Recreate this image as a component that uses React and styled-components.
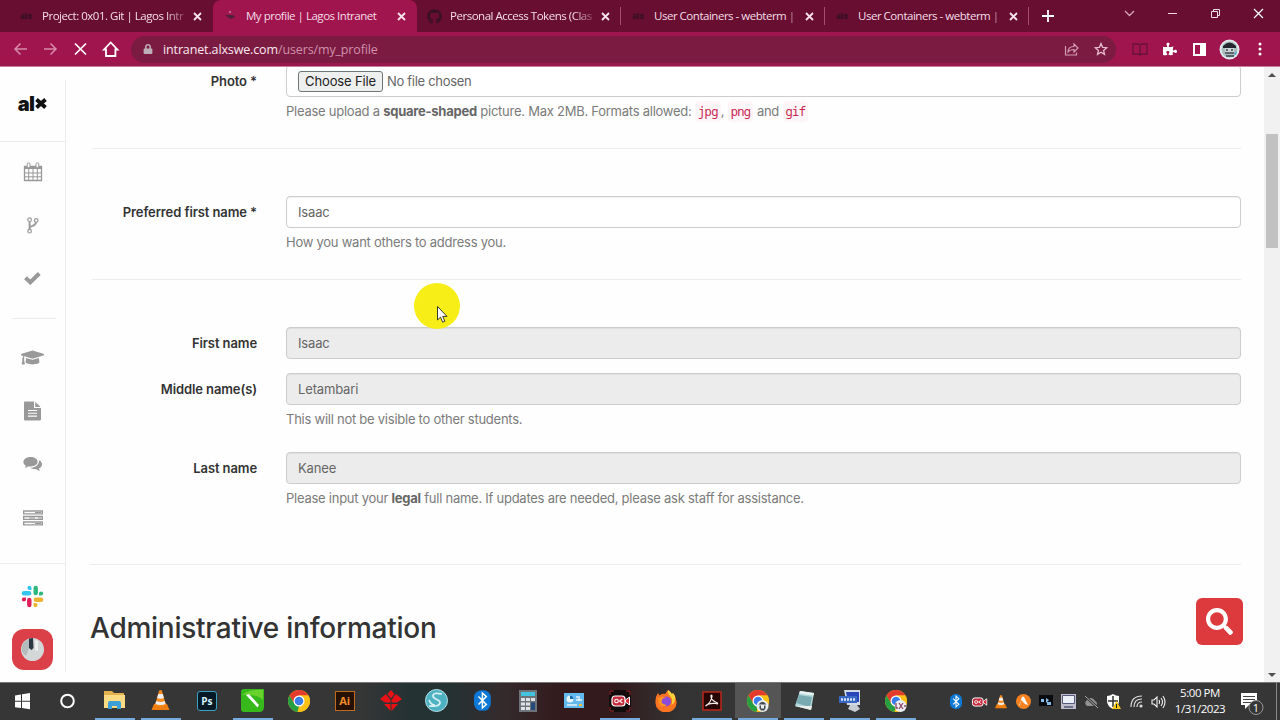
import React from 'react'
import styled, {createGlobalStyle, css} from 'styled-components'
import {FaGraduationCap, FaSearch, FaGithub, FaPuzzlePiece, FaLock} from 'react-icons/fa'

const COLORS = {
  frame: '#670e31',
  toolbar: '#a1154e',
  address: '#7c1b42',
  pink: '#d88aaa',
  line: '#ececec',
  icon: '#999',
  text: '#333',
  muted: '#7b7b7b',
  red: '#dc3a3c',
  taskbar: '#363636'
}

const UI_FONT = '"Open Sans", "Noto Sans", sans-serif'
const PAGE_FONT = 'Inter, Roboto, sans-serif'

const GlobalStyle = createGlobalStyle`
  * { box-sizing: border-box; }
  body {
    margin: 0;
    overflow: hidden;
    background: #fff;
  }
`

const Screen = styled.div`
  position: relative;
  display: flex;
  flex-direction: column;
  width: 1280px;
  height: 720px;
  overflow: hidden;
  font-family: ${PAGE_FONT};
`

/* Browser frame */

const TabStrip = styled.div`
  display: flex;
  flex: none;
  height: 32px;
  padding-left: 9px;
  background: ${COLORS.frame};
  color: #f4dde6;
  font-family: ${UI_FONT};
`

const Tab = styled.div`
  display: flex;
  align-items: center;
  width: 204px;
  height: 32px;
  padding: 0 10px 0 9px;
  border-radius: 8px 8px 0 0;
  background: ${p => (p.$active ? COLORS.toolbar : 'transparent')};
`

const TabDivider = styled.i`
  width: 1px;
  height: 18px;
  margin: 7px 0 0 -1px;
  background: #a34d6f;
`

const Favicon = styled.span`
  display: flex;
  flex: none;
  justify-content: center;
  width: 16px;
  color: #3a1023;
  font: 900 8px/10px Inter, sans-serif;
`

const TabTitle = styled.span`
  flex: none;
  width: 143px;
  margin-left: 8px;
  white-space: nowrap;
  font-size: 11.5px;
  line-height: 18px;
  letter-spacing: -0.48px;
  ${p => p.$fade && css`
    mask-image: linear-gradient(90deg, #000 86%, rgba(0, 0, 0, 0.25));
  `}
`

const TitleBar = styled.span`
  opacity: 0.6;
`

const TabClose = styled.svg`
  flex: none;
  width: 9px;
  height: 9px;
  margin-left: 8px;
`

const NewTab = styled.svg`
  width: 12px;
  height: 12px;
  margin: 10px 0 0 13px;
`

const WindowButtons = styled.div`
  display: flex;
  margin-left: auto;
  height: 27px;

  svg {
    width: 43px;
    height: 27px;
  }
`

const Toolbar = styled.div`
  display: flex;
  align-items: center;
  flex: none;
  height: 35px;
  background: linear-gradient(${COLORS.toolbar} 85%, #98184a);
  border-bottom: 1px solid #c87f9d;
  font-family: ${UI_FONT};
`

const NavButtons = styled.div`
  display: flex;
  width: 131px;
  padding-left: 6px;

  svg {
    width: 30px;
    height: 18px;
  }
`

const AddressBar = styled.div`
  display: flex;
  align-items: center;
  width: 985px;
  height: 27px;
  padding: 0 8px 0 12px;
  border-radius: 14px;
  background: ${COLORS.address};
  color: #bdb0b6;
`

const Url = styled.span`
  flex: 1;
  margin-left: 10px;
  color: #cf91ab;
  font-size: 12.5px;
  letter-spacing: -0.13px;

  b {
    color: #f8e9ef;
    font-weight: 400;
  }
`

const AddressActions = styled.div`
  display: flex;
  gap: 14px;
`

const Extensions = styled.div`
  display: flex;
  align-items: center;
  margin-left: 13px;
  color: #fff;

  svg { display: block; }
`

const ExtensionSlot = styled.span`
  display: flex;
  justify-content: center;
  width: ${p => p.$width}px;
`

/* Page */

const Page = styled.div`
  display: flex;
  flex: none;
  height: 615px;
  overflow: hidden;
  background: #fefefe;
`

const Sidebar = styled.aside`
  display: flex;
  flex: none;
  flex-direction: column;
  width: 66px;
  height: 592px;
  margin-top: 13px;
  border-right: 1px solid ${COLORS.line};
  color: ${COLORS.icon};
`

const Logo = styled.div`
  display: flex;
  flex: none;
  justify-content: center;
  height: 62px;
  padding-top: 14px;
  border-bottom: 1px solid ${COLORS.line};
  color: #111;
  font: 900 20px/20px Inter, sans-serif;
  letter-spacing: -0.6px;

  svg {
    width: 12px;
    height: 11px;
    margin: 4px 0 0 1px;
  }
`

const SideGroup = styled.div`
  display: grid;
  flex: none;
  grid-auto-rows: 53.5px;
  place-items: center;
  padding: ${p => p.$pad};
`

const SideRule = styled.i`
  flex: none;
  height: 1px;
  margin: ${p => (p.$inset ? '0 9px 0 12px' : 0)};
  background: ${COLORS.line};
`

const ProfileTile = styled.div`
  display: grid;
  place-items: center;
  width: 41px;
  height: 41px;
  border-radius: 12px;
  background: #db4048;
`

const Main = styled.main`
  flex: 1;
  min-width: 0;
  padding: 0 24px;
`

const FormRow = styled.div`
  display: grid;
  grid-template-columns: 167px 955px;
  column-gap: 29px;
  margin-top: ${p => p.$top}px;
`

const FieldLabel = styled.label`
  color: ${COLORS.text};
  font-size: 13px;
  font-weight: 600;
  line-height: 32px;
  text-align: right;
  white-space: nowrap;
  letter-spacing: -0.1px;
`

const Input = styled.input`
  display: block;
  width: 955px;
  height: 32px;
  padding: 0 11px;
  border: 1px solid #ccc;
  border-radius: 4px;
  background: ${p => (p.readOnly ? '#ececec' : '#fff')};
  box-shadow: inset 0 1px 1px rgba(0, 0, 0, 0.06);
  color: #666;
  font: 13px ${PAGE_FONT};
  letter-spacing: -0.15px;
  outline: 0;
`

const FileInput = styled.div`
  display: flex;
  align-items: center;
  height: 32px;
  padding: 0 11px;
  border: 1px solid #ccc;
  border-radius: 4px;
  background: #fff;
  color: #666;
  font-size: 13px;
  letter-spacing: -0.3px;
`

const FileButton = styled.button`
  width: 85px;
  height: 21px;
  margin-right: 4px;
  padding: 0;
  border: 1px solid #6d7674;
  border-radius: 3px;
  background: #edf0ef;
  color: #222;
  font: 13px/18px ${PAGE_FONT};
  letter-spacing: -0.15px;
  white-space: nowrap;
`

const Help = styled.p`
  height: 20px;
  margin: 4px 0 0;
  color: ${COLORS.muted};
  font-size: 13px;
  line-height: 20px;
  white-space: nowrap;
  letter-spacing: -0.25px;

  b {
    color: #666;
    font-weight: 700;
  }
`

const Code = styled.code`
  padding: 2px 3px;
  border-radius: 4px;
  background: #fdf5f7;
  color: #c7254e;
  font: 12px "Noto Sans Mono", "DejaVu Sans Mono", monospace;
  letter-spacing: -0.6px;
`

const Rule = styled.hr`
  width: ${p => (p.$wide ? 1151 : 1149)}px;
  height: 1px;
  margin: ${p => p.$top}px 0 0 ${p => (p.$wide ? 0 : 2)}px;
  border: 0;
  background: ${COLORS.line};
`

const SectionFooter = styled.div`
  display: flex;
  width: 1153px;
  justify-content: space-between;
  align-items: flex-start;
`

const Heading = styled.h2`
  margin: 45px 0 0;
  color: ${COLORS.text};
  font-size: 28px;
  font-weight: 500;
  line-height: 36px;
  white-space: nowrap;
  letter-spacing: -0.25px;
`

const SearchButton = styled.button`
  display: grid;
  place-items: center;
  width: 47px;
  height: 47px;
  margin-top: 33px;
  padding: 0;
  border: 0;
  border-radius: 6px;
  background: ${COLORS.red};
  color: #fff;
`

const Scrollbar = styled.div`
  display: flex;
  flex: none;
  flex-direction: column;
  align-items: center;
  width: 16px;
  background: #f1f1f1;
`

const ScrollArrow = styled.i`
  border: 4px solid transparent;
  ${p => (p.$down
    ? css`border-top-color: #505050; margin: auto 0 1px;`
    : css`border-bottom-color: #505050; margin-top: 2px;`)}
`

const ScrollThumb = styled.div`
  width: 12px;
  height: 114px;
  margin-top: 57px;
  background: #c1c1c1;
`

/* Taskbar */

const Taskbar = styled.footer`
  display: flex;
  flex: none;
  height: 38px;
  border-top: 1px solid #777;
  background: linear-gradient(90deg, #363636 0 28%, #243234 32% 35%, #342b2d 39%, #331a1d 44% 48%, #333 53%, #363636 60%);
  color: #fff;
  font-family: ${UI_FONT};
`

const SystemButtons = styled.div`
  display: flex;
  width: 92px;

  svg {
    width: 45px;
    height: 36px;
  }
`

const TaskItem = styled.div`
  display: grid;
  place-items: center;
  width: 45.95px;
  height: 37px;
  border-bottom: 2px solid transparent;
  background: ${p => (p.$active ? '#555' : 'none')};
  background-clip: padding-box;
  ${p => p.$open && css`
    border-image: linear-gradient(90deg, transparent 10%, #77aadd 10% 90%, transparent 90%) 2;
  `}

  svg { display: block; }
`

const AppBadge = styled.span`
  display: grid;
  place-items: center;
  width: 20px;
  height: 20px;
  border: 1.5px solid ${p => p.$color};
  border-radius: ${p => p.$radius || 0};
  background: ${p => p.$bg};
  color: ${p => p.$fg || p.$color};
  font: 700 ${p => p.$size || 10}px/1 ${UI_FONT};
`

const Tray = styled.div`
  display: grid;
  grid-template-columns: repeat(10, 22.5px);
  place-items: center;
  margin-left: auto;

  svg { display: block; }
`

const Clock = styled.div`
  width: 60px;
  padding-top: 2px;
  font-size: 11.5px;
  line-height: 16px;
  text-align: center;
  white-space: nowrap;
  letter-spacing: -0.45px;
`

const Notifications = styled.div`
  width: 50px;

  svg { display: block; }
`

/* Pointer highlight floats over the form */
const Pointer = styled.svg`
  position: absolute;
  left: 413px;
  top: 282px;
`

const CalendarIcon = () => (
  <svg width='20' height='20' viewBox='0 0 20 20' fill='none' stroke='currentColor'>
    <path d='M1.5 4.5h17v14h-17z' strokeWidth='1.3' />
    <path d='M1 4h18v3H1z' fill='currentColor' stroke='none' />
    <path d='M5.7 7v12M10 7v12M14.3 7v12M1.5 11h17M1.5 14.8h17' />
    <rect x='4.2' y='.9' width='2.8' height='4.6' rx='1.2' fill='#fefefe' />
    <rect x='13' y='.9' width='2.8' height='4.6' rx='1.2' fill='#fefefe' />
  </svg>
)

const ForkIcon = () => (
  <svg width='12' height='17' viewBox='0 0 12 17' fill='none' stroke='currentColor' strokeWidth='1.2'>
    <path d='M2.6 4.5v8M2.6 10.8c0-2.4 6.5-.8 6.5-6' strokeWidth='1.9' />
    <circle cx='2.6' cy='2.7' r='1.8' fill='#fefefe' />
    <circle cx='2.6' cy='14.2' r='1.8' fill='#fefefe' />
    <circle cx='9.2' cy='3.4' r='1.8' fill='#fefefe' />
  </svg>
)

const TickIcon = () => (
  <svg width='17' height='13' viewBox='0 0 17 13' fill='none' stroke='currentColor' strokeWidth='4'>
    <path d='M1.5 5.7l4.8 4.6 9-8.8' />
  </svg>
)

const FileIcon = () => (
  <svg width='17' height='20' viewBox='0 0 17 20' fill='currentColor'>
    <path d='M1 .5h9v6.600h7v11.400a1 1 0 0 1-1 1H1a1 1 0 0 1-1-1v-17a1 1 0 0 1 1-1z' />
    <path d='M11.200.7l5.300 5.200h-5.300z' />
    <path d='M4 9.500h9M4 12.300h9M4 15.100h9' stroke='#fefefe' strokeWidth='1.1' />
  </svg>
)

const ChatIcon = () => (
  <svg width='20' height='16' viewBox='0 0 20 16' fill='currentColor'>
    <path d='M7.500 1C3.400 1 .4 3.200.4 6c0 1.600 1 3 2.500 3.800-.2.8-.7 1.400-1.200 2 1.600-.2 2.800-.8 3.800-1.500.6.2 1.300.2 2 .2 4.100 0 7.100-2 7.100-4.700S11.600 1 7.500 1z' />
    <path d='M16 4.300c.5 3.800-3.200 7.400-8.700 7.500 1.400 1 3.300 1.500 5.400 1.200 1 .8 2.500 1.500 4.300 1.700-.6-.7-1-1.300-1.200-2.100C19.600 11 20.700 6.600 16 4.300z' />
  </svg>
)

const ServerIcon = () => (
  <svg width='20' height='16' viewBox='0 0 20 16' fill='none' stroke='currentColor' strokeWidth='1.4'>
    <path d='M.7 1h18.600v2.900H.7zM.7 6.500h18.600v2.900H.7zM.7 12h18.600v2.900H.7z' />
    <path d='M12 2.500h6M6 8h6M15 8h3M12 13.500h6' strokeWidth='1.2' />
  </svg>
)

const SlackIcon = () => (
  <svg width='23' height='23' viewBox='0 0 23 23' strokeWidth='4.4' strokeLinecap='round'>
    <path d='M2.900 8.300h5.200' stroke='#36c5f0' />
    <path d='M14.700 2.900v5.200' stroke='#2eb67d' />
    <path d='M14.900 14.700h5.200' stroke='#ecb22e' />
    <path d='M8.300 14.900v5.200' stroke='#e01e5a' />
    <path d='M8.500.8a2.100 2.100 0 1 0 0 4.200h2V2.900A2.100 2.100 0 0 0 8.500.8z' fill='#36c5f0' />
    <path d='M22.200 8.500a2.100 2.100 0 0 0-4.200 0v2h2.100a2.100 2.100 0 0 0 2.100-2z' fill='#2eb67d' />
    <path d='M14.500 22.200a2.100 2.100 0 0 0 0-4.200h-2v2.100c0 1.200.9 2.100 2 2.100z' fill='#ecb22e' />
    <path d='M.8 14.500a2.100 2.100 0 0 0 4.200 0v-2H2.900a2.100 2.100 0 0 0-2.100 2z' fill='#e01e5a' />
  </svg>
)

const Avatar = () => (
  <svg width='23' height='23' viewBox='0 0 23 23'>
    <circle cx='11.5' cy='11.5' r='11.5' fill='#d3d7d8' />
    <path d='M3 4l5-3v9l-3 8-4-4V8z' fill='#b5babd' />
    <path d='M8 .5l4-.4.5 10-2 2-2.500-2z' fill='#2c3642' />
    <path d='M14 2l3 1v10l-3-1z' fill='#edf0f1' />
  </svg>
)

const ChromeIcon = ({badge}) => (
  <svg width='24' height='24' viewBox='0 0 24 24'>
    <circle cx='12' cy='12' r='11' fill='#fbc116' />
    <path d='M2.500 6.500A11 11 0 0 1 21.500 6.500H12L7.200 14.700z' fill='#e33b2e' />
    <path d='M2.500 6.500l4.800 8.300L12 17.500l-1.600 5.400A11 11 0 0 1 2.500 6.500z' fill='#269f42' />
    <path d='M16.800 14.800L12 23A11 11 0 0 0 21.500 6.500H12z' fill='#fbc116' />
    <circle cx='12' cy='12' r='5.5' fill='#fff' />
    <circle cx='12' cy='12' r='4.3' fill='#3b7de8' />
    {badge && <circle cx='16.5' cy='17' r='6' fill='#e9eef0' />}
    {badge === 'face' && <path d='M12.500 15.500q4-5.500 8 0zM13.500 16.500h1.500v3h3v-3h1.500v3l-1.500 2h-3l-1.500-2z' fill='#41484e' />}
    {badge === 'script' && <path d='M12 14v5h2M15 14l4 6M19 14l-4 6M20 17h2' fill='none' stroke='#8f4668' strokeWidth='1.3' />}
  </svg>
)

const ConeIcon = ({size = 21}) => (
  <svg width={size} height={size} viewBox='0 0 21 21'>
    <path d='M4 14h13l2.500 6h-18z' fill='#ef7d10' />
    <path d='M10.500 0q1.200 0 1.500 1l4 14q-5.500 3-11 0L9 1q.3-1 1.500-1z' fill='#f58a1c' />
    <path d='M8.200 4h4.600l1.100 4q-3.400 1.500-6.800 0zM6.200 11q4.300 2 8.600 0l.8 3q-5 2.200-10.200 0z' fill='#eee' />
  </svg>
)

const CameraIcon = ({small}) => (
  <svg width={small ? 18 : 22} height={small ? 18 : 22} viewBox='0 0 22 22'>
    {!small && <rect width='22' height='22' fill='#120b0c' />}
    {!small && <path d='M1 5V1h4M17 1h4v4M21 17v4h-4M5 21H1v-4' fill='none' stroke='#9c262c' />}
    <rect x='3' y='6' width='13' height='10' rx='3' fill='#c62b3c' stroke='#fff' strokeWidth='1.2' />
    <path d='M16.500 10l4-3v8l-4-3z' fill='#d72c3c' stroke='#fff' />
    <circle cx='7.5' cy='11' r='1.8' fill='none' stroke='#fff' strokeWidth='1.1' />
    <path d='M13.500 9l-3 2 3 2' fill='none' stroke='#fff' strokeWidth='1.1' />
  </svg>
)

const BluetoothIcon = ({size = 21}) => (
  <svg width={size * 0.8} height={size} viewBox='0 0 17 21'>
    <rect width='17' height='21' rx='7.5' fill='#0d78d6' />
    <path d='M4.500 6.500l8 8-4 3.500V3l4 3.500-8 8' fill='none' stroke='#fff' strokeWidth='1.5' />
  </svg>
)

const ExplorerIcon = () => (
  <svg width='21' height='19' viewBox='0 0 21 19'>
    <path d='M0 0h8l2 2h10v4H0z' fill='#e2b24e' />
    <path d='M0 4h21v13H0z' fill='#fbdc85' />
    <path d='M4 18v-6q0-2 2-2h9q2 0 2 2v6h-4v-3H8v3z' fill='#3ca0d8' />
  </svg>
)

const CorelIcon = () => (
  <svg width='23' height='23' viewBox='0 0 23 23'>
    <path d='M3 0h20v18q0 5-5 5H3q-3 0-3-3V3q0-3 3-3z' fill='#37b81b' />
    <path d='M1 6q8-6 21-5v10q-5-6-21-5z' fill='#7fdd34' opacity='.7' />
    <path d='M5 6l3-1 10 11-1.500 2.500z' fill='#fff' />
  </svg>
)

const RedDiamondIcon = () => (
  <svg width='22' height='22' viewBox='0 0 22 22' fill='#e81216'>
    <path d='M11 0l3.500 4L11 8.500 7.500 4zM0 9l6-5 4.500 6v2.500H5zM22 9l-6-5-4.500 6v2.500H17zM4 14h6.500v7zM18 14h-6.500v7z' />
  </svg>
)

const SwirlIcon = () => (
  <svg width='23' height='23' viewBox='0 0 23 23'>
    <circle cx='11.5' cy='11.5' r='11' fill='#4eb2c3' stroke='#b4dfe5' />
    <path d='M17 5q-9-2-9 2c0 4 8 3 7 7q-1 4-11 3M4 11q2 5 6 5' fill='none' stroke='#d9f0f3' strokeWidth='1.7' />
  </svg>
)

const CalculatorIcon = () => (
  <svg width='18' height='22' viewBox='0 0 18 22'>
    <path d='M0 0h18v22H0z' fill='#6d7379' />
    <path d='M2 2h14v4H2z' fill='#42c3df' />
    <path d='M2 8h4v3H2zM7 8h4v3H7zM2 12.500h4v3H2zM7 12.500h4v3H7zM2 17h4v3H2zM7 17h4v3H7zM12 8h4v3h-4z' fill='#dfe2e5' />
    <path d='M12 12.500h4V20h-4z' fill='#244b78' />
  </svg>
)

const PanelIcon = () => (
  <svg width='20' height='15' viewBox='0 0 20 15'>
    <path d='M0 0h20v15H0z' fill='#62b9ee' />
    <circle cx='6' cy='6' r='3.5' fill='#e8f6ff' />
    <path d='M6 6V2.500A3.500 3.500 0 0 1 9.500 6z' fill='#146cb2' />
    <path d='M12 4h2M15 3v5M12 7h6M3 12h10' stroke='#e7f5fc' strokeWidth='1.4' />
    <path d='M15 12h3' stroke='#f5c13b' strokeWidth='2' />
  </svg>
)

const FirefoxIcon = () => (
  <svg width='22' height='22' viewBox='0 0 22 22'>
    <path d='M3 3l1.500 2.500Q7 3 10 4l3-4q2 1 4 4l1-1q4 5 3.500 10A10.500 9.500 0 0 1 .5 13Q0 7 3 3z' fill='#ff7420' />
    <path d='M13 0q-1 3 2 6 4 4 1 9 5-2 4-9l-2-3-1 1q-2-3-4-4z' fill='#ffd23c' />
    <circle cx='11' cy='11.5' r='5' fill='#8c4bd8' />
    <path d='M3 8q5-2 8 0-4 0-4 2-2 4 5 5-5 3-8-1z' fill='#ff9224' />
  </svg>
)

const AcrobatIcon = () => (
  <svg width='20' height='20' viewBox='0 0 20 20'>
    <path d='M1 1h18v18H1z' fill='#260605' stroke='#ba271c' strokeWidth='1.5' />
    <path d='M4 14.500q5-3 6-9 0-2-1-1-.5 5 6.500 7.500.5 1.500-2 .5-4-.5-8 1-2 2-1.500 1z' fill='none' stroke='#f6eeee' strokeWidth='1.2' />
  </svg>
)

const NotepadIcon = () => (
  <svg width='20' height='21' viewBox='0 0 20 21'>
    <path d='M6 1l14 2-3 17-16-4z' fill='#b1d7da' />
    <path d='M6 1l14 2-.5 2.500L5 3.500z' fill='#e7f1ef' />
    <path d='M5 5l13 2-2 10-14-4z' fill='#79aab1' />
    <path d='M1 16l16 4 1-4z' fill='#ecefe9' />
  </svg>
)

const RemoteIcon = () => (
  <svg width='22' height='22' viewBox='0 0 22 22'>
    <path d='M5 0h16v15H8z' fill='#d3dae5' />
    <path d='M7 2h13v10H9z' fill='#2746b9' />
    <path d='M0 6h18v7H0z' fill='#3868c4' />
    <path d='M2 9.500h14' stroke='#d6e4ff' strokeWidth='2.4' strokeDasharray='2 1' />
    <path d='M11 15h7l3 4-5 3-7-3z' fill='#c7cbd2' />
  </svg>
)

const APPS = [
  {name: 'explorer', icon: <ExplorerIcon />, open: true},
  {name: 'vlc', icon: <ConeIcon />, open: true},
  {name: 'photoshop', icon: <AppBadge $color='#3ba2c4' $bg='#071a26' $fg='#d6f3ff' $radius='3px'>Ps</AppBadge>},
  {name: 'corel', icon: <CorelIcon />, open: true},
  {name: 'chrome', icon: <ChromeIcon />},
  {name: 'illustrator', icon: <AppBadge $color='#c06a1d' $bg='#261204' $fg='#f08c28' $size={11}>Ai</AppBadge>},
  {name: 'diamond', icon: <RedDiamondIcon />},
  {name: 'swirl', icon: <SwirlIcon />},
  {name: 'bluetooth', icon: <BluetoothIcon />},
  {name: 'calculator', icon: <CalculatorIcon />},
  {name: 'panel', icon: <PanelIcon />},
  {name: 'recorder', icon: <CameraIcon />, open: true},
  {name: 'firefox', icon: <FirefoxIcon />},
  {name: 'acrobat', icon: <AcrobatIcon />, open: true},
  {name: 'chrome-profile', icon: <ChromeIcon badge='face' />, open: true, active: true},
  {name: 'notepad', icon: <NotepadIcon />, open: true},
  {name: 'remote', icon: <RemoteIcon />, open: true},
  {name: 'chrome-work', icon: <ChromeIcon badge='script' />, open: true}
]

const TABS = [
  {title: 'Project: 0x01. Git | Lagos Intr', fade: true},
  {title: 'My profile | Lagos Intranet', active: true},
  {title: 'Personal Access Tokens (Clas', github: true, fade: true, divided: true},
  {title: 'User Containers - webterm', bar: true, divided: true},
  {title: 'User Containers - webterm', bar: true, divided: true}
]

const LoadingIcon = () => (
  <svg width='14' height='14' viewBox='0 0 14 14'>
    <path d='M2 6h8l2 2-4 2-2-1z' fill='#50203a' />
    <circle cx='7' cy='3' r='1.2' fill='#c3658b' />
  </svg>
)

const TabIcon = ({tab}) => {
  if (tab.github) return <FaGithub size={15} />
  return tab.active ? <LoadingIcon /> : 'alx'
}

const BrowserFrame = () => (
  <header>
    <TabStrip>
      {TABS.map((tab, i) => (
        <React.Fragment key={i}>
          <Tab $active={tab.active}>
            <Favicon><TabIcon tab={tab} /></Favicon>
            <TabTitle $fade={tab.fade}>
              {tab.title}{tab.bar && <TitleBar> |</TitleBar>}
            </TabTitle>
            <TabClose viewBox='0 0 9 9'>
              <path d='M1 1l7 7M8 1L1 8' stroke='#f6e3eb' strokeWidth='1.8' fill='none' />
            </TabClose>
          </Tab>
          {tab.divided && <TabDivider />}
        </React.Fragment>
      ))}
      <NewTab viewBox='0 0 12 12'><path d='M6 0v12M0 6h12' stroke='#fff' strokeWidth='1.8' /></NewTab>
      <WindowButtons>
        <svg viewBox='0 0 43 27' fill='none' stroke='#d9a5bb' strokeWidth='1.3'><path d='M17 11l4.500 4.500L26 11' /></svg>
        <svg viewBox='0 0 43 27' stroke='#eed4df'><path d='M17 13.500h9' /></svg>
        <svg viewBox='0 0 43 27' fill='none' stroke='#f3dfe7'><path d='M17.500 11.500h6v6h-6zM19.500 11.500v-2h6v6h-2' /></svg>
        <svg viewBox='0 0 43 27' stroke='#fff' strokeWidth='1.2'><path d='M17 9l9 9M26 9l-9 9' /></svg>
      </WindowButtons>
    </TabStrip>
    <Toolbar>
      <NavButtons>
        <svg viewBox='0 0 30 18' fill='none' stroke={COLORS.pink} strokeWidth='1.5'><path d='M21 9H9M14.500 3.500L9 9l5.500 5.500' /></svg>
        <svg viewBox='0 0 30 18' fill='none' stroke={COLORS.pink} strokeWidth='1.5'><path d='M8 9h12M14.500 3.500L20 9l-5.500 5.500' /></svg>
        <svg viewBox='0 0 30 18' stroke='#fff' strokeWidth='1.7'><path d='M9 3.500l11 11M20 3.500l-11 11' /></svg>
        <svg viewBox='0 0 30 18' fill='none' stroke='#fff' strokeWidth='1.8'><path d='M8 9.500l6.700-7 6.700 7h-2V16h-9.400V9.500z' /></svg>
      </NavButtons>
      <AddressBar>
        <FaLock size={10} />
        <Url><b>intranet.alxswe.com</b>/users/my_profile</Url>
        <AddressActions>
          <svg width='16' height='14' viewBox='0 0 16 14' fill='none' stroke='#d39bb2' strokeWidth='1.2'>
            <path d='M1.500 4v9h11v-2.500M4 10c0-4 2-5.500 6-5.500V2l4 4-4 4V7.500c-3 0-4.500.5-6 2.500z' />
          </svg>
          <svg width='14' height='14' viewBox='0 0 14 14' fill='none' stroke='#e6bdcd' strokeWidth='1.3'>
            <path d='M7 1.500l1.600 3.800 4.100.4-3.100 2.700.9 4L7 10.300l-3.500 2.100.9-4-3.100-2.700 4.100-.4z' />
          </svg>
        </AddressActions>
      </AddressBar>
      <Extensions>
        <ExtensionSlot $width={22}>
          <svg width='16' height='13' viewBox='0 0 16 13' fill='none' stroke='#681238' strokeWidth='1.4'><path d='M1 1h5l2 1 2-1h5v10h-5l-2 1-2-1H1zM8 2v10' /></svg>
        </ExtensionSlot>
        <ExtensionSlot $width={38}><FaPuzzlePiece size={14} /></ExtensionSlot>
        <ExtensionSlot $width={21}>
          <svg width='13' height='13' viewBox='0 0 13 13'><path d='M0 0h13v13H0zM2 2v9h5V2z' fill='#fff' fillRule='evenodd' /></svg>
        </ExtensionSlot>
        <ExtensionSlot $width={38}>
          <svg width='21' height='21' viewBox='0 0 21 21'>
            <circle cx='10.5' cy='10.5' r='10' fill='#dfe9e9' />
            <circle cx='10.5' cy='10.5' r='8' fill='#a9bcbf' />
            <path d='M4 7q6.500-7 13 0v2H4z' fill='#24282e' />
            <path d='M6 9h9v6H6z' fill='#ccd5d6' />
            <path d='M7 11h2M12 11h2M6 14h9M7 17h8' stroke='#39434a' strokeWidth='1.6' />
            <path d='M15 15l3-3-1 4z' fill='#38a4c8' />
          </svg>
        </ExtensionSlot>
        <ExtensionSlot $width={23}>
          <svg width='4' height='14' viewBox='0 0 4 14' fill='#fff'><circle cx='2' cy='2' r='1.5' /><circle cx='2' cy='7' r='1.5' /><circle cx='2' cy='12' r='1.5' /></svg>
        </ExtensionSlot>
      </Extensions>
    </Toolbar>
  </header>
)

const SideNav = () => (
  <Sidebar>
    <Logo>
      al
      <svg viewBox='0 0 12 11' stroke='#111' strokeWidth='3.8' fill='none'><path d='M1.500 1.500l9 8M10.500 1.500l-9 8' /></svg>
    </Logo>
    <SideGroup $pad='3px 0 12px'>
      <CalendarIcon />
      <ForkIcon />
      <TickIcon />
    </SideGroup>
    <SideRule $inset />
    <SideGroup $pad='12px 0 18px'>
      <FaGraduationCap size={23} />
      <FileIcon />
      <ChatIcon />
      <ServerIcon />
    </SideGroup>
    <SideRule />
    <SideGroup $pad='6px 0 0'>
      <SlackIcon />
      <ProfileTile><Avatar /></ProfileTile>
    </SideGroup>
  </Sidebar>
)

const ProfileForm = () => (
  <Main>
    <FormRow $top={-2}>
      <FieldLabel>Photo *</FieldLabel>
      <div>
        <FileInput><FileButton>Choose File</FileButton>No file chosen</FileInput>
        <Help>
          Please upload a <b>square-shaped</b> picture. Max 2MB. Formats allowed: <Code>jpg</Code>, <Code>png</Code> and <Code>gif</Code>
        </Help>
      </div>
    </FormRow>
    <Rule $top={27} />
    <FormRow $top={47}>
      <FieldLabel>Preferred first name *</FieldLabel>
      <div>
        <Input defaultValue='Isaac' />
        <Help>How you want others to address you.</Help>
      </div>
    </FormRow>
    <Rule $top={27} />
    <FormRow $top={47}>
      <FieldLabel>First name</FieldLabel>
      <Input readOnly value='Isaac' />
    </FormRow>
    <FormRow $top={14}>
      <FieldLabel>Middle name(s)</FieldLabel>
      <div>
        <Input readOnly value='Letambari' />
        <Help>This will not be visible to other students.</Help>
      </div>
    </FormRow>
    <FormRow $top={23}>
      <FieldLabel>Last name</FieldLabel>
      <div>
        <Input readOnly value='Kanee' />
        <Help>Please input your <b>legal</b> full name. If updates are needed, please ask staff for assistance.</Help>
      </div>
    </FormRow>
    <Rule $top={56} $wide />
    <SectionFooter>
      <Heading>Administrative information</Heading>
      <SearchButton aria-label='Search'><FaSearch size={27} /></SearchButton>
    </SectionFooter>
  </Main>
)

const SystemTaskbar = () => (
  <Taskbar>
    <SystemButtons>
      <svg viewBox='0 0 45 36' fill='#fff'><path d='M15 12.500l6-1v6.300h-6zM22 11.300l8-1.200v7.700h-8zM15 18.800h6V25l-6-.8zM22 18.800h8v7.500l-8-1.200z' /></svg>
      <svg viewBox='0 0 45 36' fill='none' stroke='#fff' strokeWidth='2'><circle cx='22.5' cy='18' r='6.3' /></svg>
    </SystemButtons>
    {APPS.map(app => (
      <TaskItem key={app.name} $open={app.open} $active={app.active}>{app.icon}</TaskItem>
    ))}
    <Tray>
      <BluetoothIcon size={15} />
      <CameraIcon small />
      <ConeIcon size={14} />
      <svg width='15' height='15' viewBox='0 0 15 15'><circle cx='7.5' cy='7.5' r='7.5' fill='#f58220' /><path d='M3 12L6 3q1-1 2 0l4 8-3-1-4-4-1 5z' fill='#fff' /></svg>
      <svg width='14' height='13' viewBox='0 0 14 13'><path d='M0 0h14v11H0z' fill='#080b10' /><path d='M2 4h3v3H2zM7 3l3 2-3 3M8 7h4v3H8z' fill='#88bce6' /></svg>
      <svg width='15' height='15' viewBox='0 0 15 15'><path d='M0 0h15v15H0z' fill='#bdbdcb' /><path d='M1.500 1.500h12v8h-12z' fill='#eceff5' stroke='#55597e' /><path d='M3 13h9' stroke='#6d7089' strokeWidth='2' /></svg>
      <svg width='16' height='14' viewBox='0 0 16 14'><path d='M4 11a3.500 3.500 0 0 1 0-6 4.500 4.500 0 0 1 8 1 3 3 0 0 1 1 5z' fill='#929292' /><path d='M2 1l13 12' stroke='#363636' strokeWidth='2.5' /><path d='M2 1l13 12' stroke='#aaa' /></svg>
      <svg width='15' height='16' viewBox='0 0 15 16'><path d='M7 0q3 2 6 2v5q0 5-6 8-6-3-6-8V2q3 0 6-2z' fill='#fff' /><path d='M7 2v11M2 7h10' stroke='#303030' strokeWidth='1.5' /><path d='M10.500 7l4.500 8H6z' fill='#f5c919' /><path d='M10.500 10v4' stroke='#222' /></svg>
      <svg width='13' height='13' viewBox='0 0 13 13' fill='none' stroke='#ddd' strokeWidth='1.2'><path d='M1 12Q1 1 12 1M4 12q0-8 8-8M7 12q0-5 5-5' /><circle cx='11' cy='11' r='1' fill='#fff' /></svg>
      <svg width='15' height='14' viewBox='0 0 15 14' fill='none' stroke='#f2f2f2' strokeWidth='1.1'><path d='M1 5h2l3-3v10L3 9H1zM8 5q1 2 0 4M10 3q3 4 0 8M12 1q4 6 0 12' /></svg>
    </Tray>
    <Clock>5:00 PM<br />1/31/2023</Clock>
    <Notifications>
      <svg width='50' height='37' viewBox='0 0 50 37'>
        <path d='M11 10h16v12h-8l-4 4v-4h-4z' fill='#fff' />
        <path d='M13 13.500h12M13 16.500h12M13 19.500h8' stroke='#444' />
        <circle cx='26' cy='24.500' r='7' fill='#363636' stroke='#999' />
        <text x='26' y='28.500' fontSize='11' textAnchor='middle' fill='#fff'>1</text>
        <path d='M46.500 0v37' stroke='#888' />
      </svg>
    </Notifications>
  </Taskbar>
)

const App = () => (
  <Screen>
    <GlobalStyle />
    <BrowserFrame />
    <Page>
      <SideNav />
      <ProfileForm />
      <Scrollbar>
        <ScrollArrow />
        <ScrollThumb />
        <ScrollArrow $down />
      </Scrollbar>
    </Page>
    <SystemTaskbar />
    <Pointer width='48' height='48' viewBox='0 0 48 48'>
      <circle cx='24' cy='24' r='23' fill='#f6ee16' />
      <path d='M24.500 24.500v13.500l3-2.800 2.200 5 2.200-1-2.200-4.800h4.300z' fill='#fff' stroke='#222' strokeWidth='.9' />
    </Pointer>
  </Screen>
)

export default App
